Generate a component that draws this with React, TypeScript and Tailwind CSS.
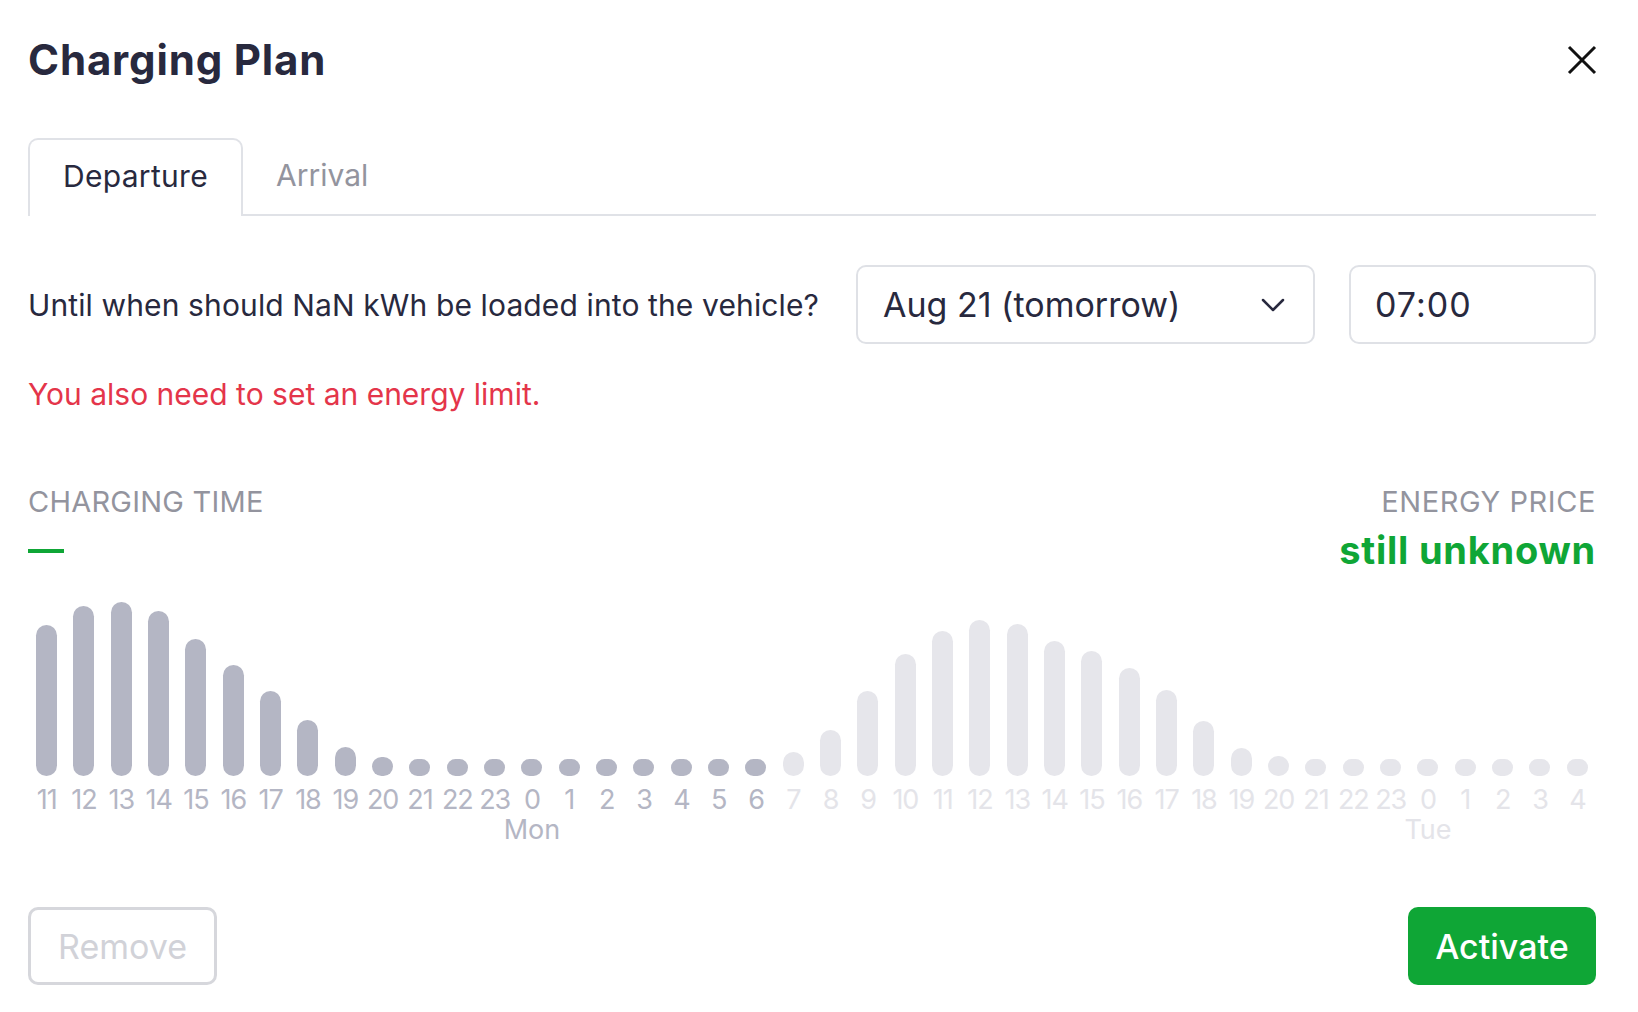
import { ChevronDown } from "lucide-react";

type Slot = { hour: number; h: number; day?: string };

const sun = [151, 170, 174, 165, 137, 111, 85, 56, 29, 19, 17, 17, 17];
const mon = [17, 17, 17, 17, 17, 17, 17, 24, 46, 85, 122, 145, 156, 152, 135, 125, 108, 86, 55, 28, 20, 17, 17, 17];
const tue = [17, 17, 17, 17, 17];

const slots: Slot[] = [
  ...sun.map((h, i) => ({ hour: 11 + i, h })),
  ...mon.map((h, i) => ({ hour: i, h, day: i === 0 ? "Mon" : undefined })),
  ...tue.map((h, i) => ({ hour: i, h, day: i === 0 ? "Tue" : undefined })),
];

// first 20 slots are up to the departure time, the rest is greyed out
const ACTIVE = 20;

function CloseIcon() {
  return (
    <svg width="30" height="30" viewBox="0 0 30 30" fill="none" stroke="#111" strokeWidth="3">
      <path d="M2 2 L28 28 M28 2 L2 28" />
    </svg>
  );
}

function PriceChart() {
  return (
    <div className="mt-[24px]">
      <div className="grid grid-cols-[repeat(42,minmax(0,1fr))] h-[180px] items-end">
        {slots.map((s, i) => (
          <div key={i} className="flex justify-center items-end h-full">
            <div
              className={`w-[21px] rounded-full ${i < ACTIVE ? "bg-[#b4b6c4]" : "bg-[#e6e6eb]"}`}
              style={{ height: s.h }}
            />
          </div>
        ))}
      </div>
      <div className="grid grid-cols-[repeat(42,minmax(0,1fr))] mt-[9px]">
        {slots.map((s, i) => (
          <div
            key={i}
            className={`flex justify-center text-[27px] leading-[30px] tracking-[-0.04em] whitespace-nowrap ${i < ACTIVE ? "text-[#b4b6c4]" : "text-[#e4e4e9]"}`}
          >
            {s.hour}
          </div>
        ))}
      </div>
      <div className="grid grid-cols-[repeat(42,minmax(0,1fr))]">
        {slots.map((s, i) => (
          <div
            key={i}
            className={`flex justify-center text-[27px] leading-[30px] whitespace-nowrap ${i < ACTIVE ? "text-[#b4b6c4]" : "text-[#e4e4e9]"}`}
          >
            {s.day ?? ""}
          </div>
        ))}
      </div>
    </div>
  );
}

export default function App() {
  return (
    <div className="min-h-[1012px] bg-white pl-[28px] pr-[42px] font-['Inter',sans-serif] text-[#28293e]">
      {/* Header */}
      <div className="flex items-center justify-between pt-[36px]">
        <h1 className="text-[42px] leading-[48px] font-bold tracking-[0.02em]">Charging Plan</h1>
        <button className="-mr-[1px]">
          <CloseIcon />
        </button>
      </div>

      {/* Tabs */}
      <div className="mt-[54px] flex border-b-2 border-[#e0e2e7]">
        <button className="-mb-[2px] px-[33px] pt-[17px] pb-[21px] border-2 border-b-0 border-[#e0e2e7] rounded-t-[10px] bg-white text-[30px] leading-[36px] tracking-[0.01em] text-[#28293e]">
          Departure
        </button>
        <button className="-mb-[2px] pl-[31px] pr-[33px] pt-[17px] pb-[21px] border-2 border-transparent text-[30px] leading-[36px] text-[#93949e]">
          Arrival
        </button>
      </div>

      {/* Departure time */}
      <div className="mt-[49px] flex items-center">
        <p className="flex-1 text-[30px] leading-[40px] tracking-[0.004em]">Until when should NaN kWh be loaded into the vehicle?</p>
        <div className="w-[459px] h-[79px] flex items-center justify-between pl-[25px] pr-[20px] border-2 border-[#dfe1e6] rounded-[10px]">
          <span className="text-[34px] leading-[40px]">Aug 21 (tomorrow)</span>
          <ChevronDown size={40} strokeWidth={1.5} className="text-[#28293e]" />
        </div>
        <div className="ml-[34px] w-[247px] h-[79px] flex items-center pl-[24px] border-2 border-[#dfe1e6] rounded-[10px]">
          <span className="text-[34px] leading-[40px] tracking-[0.03em]">07:00</span>
        </div>
      </div>

      <p className="mt-[28px] text-[30px] leading-[45px] text-[#e4354a]">You also need to set an energy limit.</p>

      {/* Chart header */}
      <div className="mt-[67px] flex items-start justify-between">
        <div>
          <div className="text-[29px] leading-[36px] tracking-[0.008em] uppercase text-[#93949e]">Charging Time</div>
          <div className="mt-[29px] w-[36px] h-[4px] bg-[#0fa636]" />
        </div>
        <div className="text-right">
          <div className="text-[29px] leading-[36px] tracking-[0.02em] uppercase text-[#93949e]">Energy Price</div>
          <div className="mt-[8px] text-[38px] leading-[44px] font-bold tracking-[0.02em] text-[#0fa636]">still unknown</div>
        </div>
      </div>

      <PriceChart />

      {/* Actions */}
      <div className="mt-[62px] flex justify-between">
        <button className="w-[189px] h-[78px] border-[3px] border-[#d6d7dc] rounded-[10px] text-[34px] text-[#d1d2d8]">
          Remove
        </button>
        <button className="w-[188px] h-[78px] bg-[#0fa636] rounded-[10px] text-[34px] font-medium text-white">
          Activate
        </button>
      </div>
    </div>
  );
}
